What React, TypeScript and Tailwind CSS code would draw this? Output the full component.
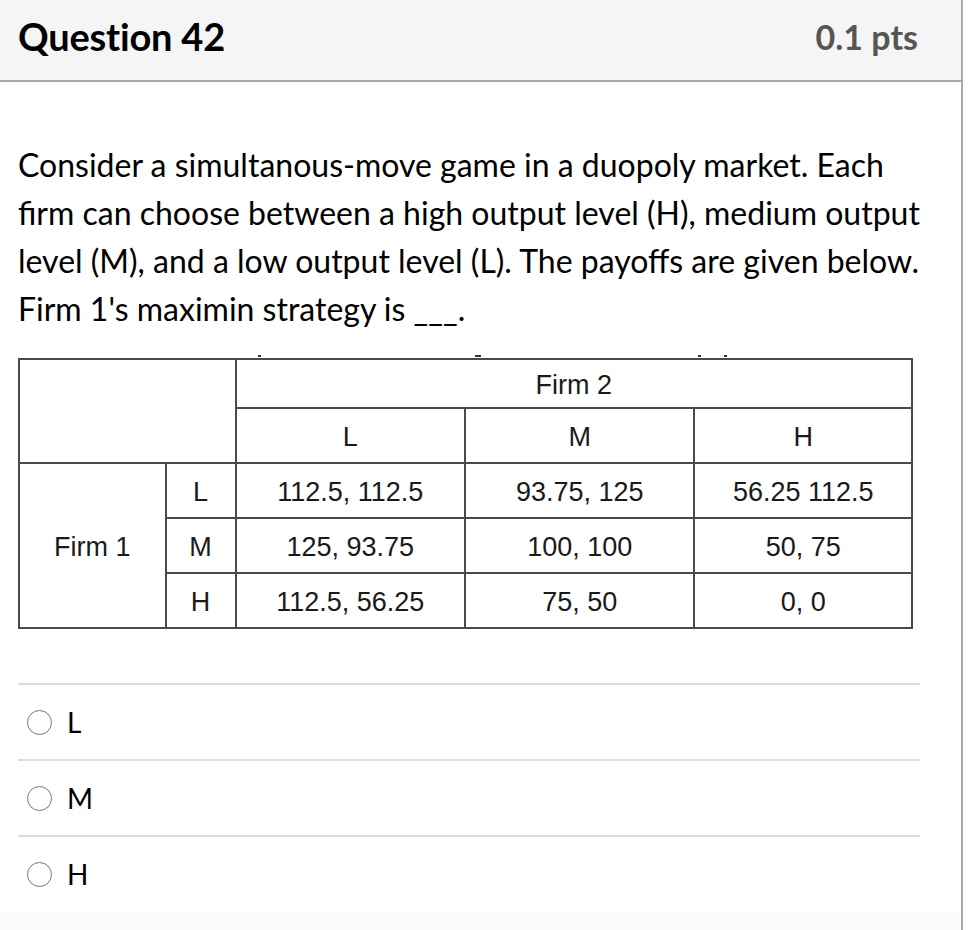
import React from "react";

const cell = "border-2 border-[#4a4a4a] text-center align-middle p-0 pt-[4px]";

export default function App() {
  const rows = [
    ["L", "112.5, 112.5", "93.75, 125", "56.25 112.5"],
    ["M", "125, 93.75", "100, 100", "50, 75"],
    ["H", "112.5, 56.25", "75, 50", "0, 0"],
  ];
  const answers = ["L", "M", "H"];
  return (
    <div className="w-[963px] h-[930px] bg-white border-r-2 border-[#aaaaaa] flex flex-col" style={{ fontFamily: "Lato, 'Noto Sans', sans-serif" }}>
      <div className="h-[82px] bg-[#f5f5f5] border-b-2 border-[#aaaaaa] flex items-center justify-between pl-[18px] pr-[43px] shrink-0">
        <div className="text-[38px] font-bold text-black tracking-[-0.2px] leading-none pb-[8px]">Question 42</div>
        <div className="text-[34px] font-bold text-[#555555] leading-none pb-[6px]">0.1 pts</div>
      </div>
      <div className="flex-1 flex flex-col pl-[18px] pr-[41px]">
        <p className="mt-[59px] text-[32px] leading-[48px] text-black">
          Consider a simultanous-move game in a duopoly market. Each firm can choose between a high output level (H), medium output level (M), and a low output level (L). The payoffs are given below. Firm 1's maximin strategy is ___.
        </p>
        <div className="relative mt-[22px] h-[3px] w-[894px]">
          <div className="absolute left-[240px] top-0 w-[3px] h-[2px] bg-[#333]" />
          <div className="absolute left-[457px] top-0 w-[6px] h-[2px] bg-[#333]" />
          <div className="absolute left-[680px] top-0 w-[3px] h-[2px] bg-[#333]" />
          <div className="absolute left-[706px] top-0 w-[3px] h-[2px] bg-[#333]" />
        </div>
        <table className="border-collapse w-[895px] text-[27px] text-[#1a1a1a]" style={{ fontFamily: "'Liberation Sans', Arial, sans-serif" }}>
          <colgroup>
            <col className="w-[147px]" />
            <col className="w-[70px]" />
            <col className="w-[230px]" />
            <col className="w-[230px]" />
            <col className="w-[218px]" />
          </colgroup>
          <tbody>
            <tr className="h-[49px]">
              <td className={cell} colSpan={2} rowSpan={2}></td>
              <td className={cell} colSpan={3}>Firm 2</td>
            </tr>
            <tr className="h-[55px]">
              <td className={cell}>L</td>
              <td className={cell}>M</td>
              <td className={cell}>H</td>
            </tr>
            {rows.map((r, i) => (
              <tr key={i} className="h-[55px]">
                {i === 0 && (
                  <td className={cell} rowSpan={3}>Firm 1</td>
                )}
                {r.map((c, j) => (
                  <td key={j} className={cell}>{c}</td>
                ))}
              </tr>
            ))}
          </tbody>
        </table>
        <div className="mt-[54px] w-[902px] flex flex-col">
          {answers.map((a) => (
            <div key={a} className="h-[76px] border-t-2 border-[#dddddd] flex items-center pl-[9px]">
              <div className="w-[25px] h-[25px] rounded-full border-[1.5px] border-[#777777] bg-white" />
              <span className="ml-[15px] text-[28px] text-black leading-none">{a}</span>
            </div>
          ))}
        </div>
      </div>
      <div className="h-[17px] bg-[#fbfbfb] shrink-0" />
    </div>
  );
}
